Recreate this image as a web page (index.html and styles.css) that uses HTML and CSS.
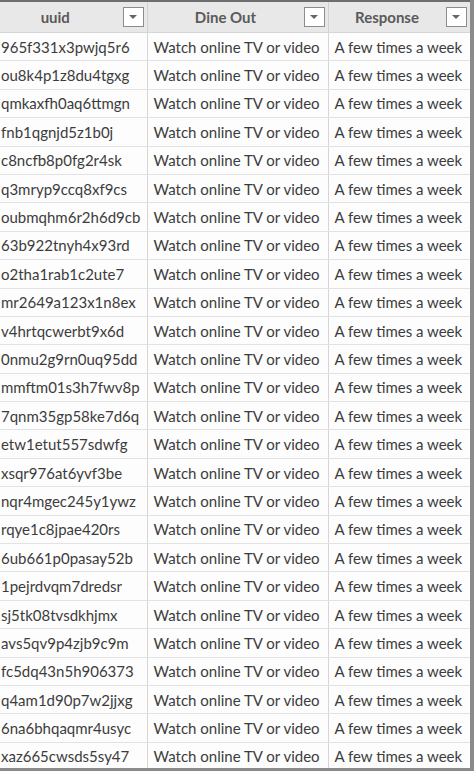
FILE: index.html
```html
<!DOCTYPE html>
<html>
<head>
<meta charset="utf-8">
<link rel="stylesheet" href="styles.css">
</head>
<body>
<div class="sheet">
  <table class="grid">
    <colgroup><col class="c1"><col class="c2"><col class="c3"></colgroup>
    <thead>
      <tr>
        <th class="h1"><div class="hcell"><span class="hlabel">uuid</span><span class="drop"></span></div></th>
        <th><div class="hcell"><span class="hlabel">Dine Out</span><span class="drop"></span></div></th>
        <th><div class="hcell"><span class="hlabel">Response</span><span class="drop"></span></div></th>
      </tr>
    </thead>
    <tbody>
      <tr><td class="id">965f331x3pwjq5r6</td><td>Watch online TV or video</td><td>A few times a week</td></tr>
      <tr><td class="id">ou8k4p1z8du4tgxg</td><td>Watch online TV or video</td><td>A few times a week</td></tr>
      <tr><td class="id">qmkaxfh0aq6ttmgn</td><td>Watch online TV or video</td><td>A few times a week</td></tr>
      <tr><td class="id">fnb1qgnjd5z1b0j</td><td>Watch online TV or video</td><td>A few times a week</td></tr>
      <tr><td class="id">c8ncfb8p0fg2r4sk</td><td>Watch online TV or video</td><td>A few times a week</td></tr>
      <tr><td class="id">q3mryp9ccq8xf9cs</td><td>Watch online TV or video</td><td>A few times a week</td></tr>
      <tr><td class="id">oubmqhm6r2h6d9cb</td><td>Watch online TV or video</td><td>A few times a week</td></tr>
      <tr><td class="id">63b922tnyh4x93rd</td><td>Watch online TV or video</td><td>A few times a week</td></tr>
      <tr><td class="id">o2tha1rab1c2ute7</td><td>Watch online TV or video</td><td>A few times a week</td></tr>
      <tr><td class="id">mr2649a123x1n8ex</td><td>Watch online TV or video</td><td>A few times a week</td></tr>
      <tr><td class="id">v4hrtqcwerbt9x6d</td><td>Watch online TV or video</td><td>A few times a week</td></tr>
      <tr><td class="id">0nmu2g9rn0uq95dd</td><td>Watch online TV or video</td><td>A few times a week</td></tr>
      <tr><td class="id">mmftm01s3h7fwv8p</td><td>Watch online TV or video</td><td>A few times a week</td></tr>
      <tr><td class="id">7qnm35gp58ke7d6q</td><td>Watch online TV or video</td><td>A few times a week</td></tr>
      <tr><td class="id">etw1etut557sdwfg</td><td>Watch online TV or video</td><td>A few times a week</td></tr>
      <tr><td class="id">xsqr976at6yvf3be</td><td>Watch online TV or video</td><td>A few times a week</td></tr>
      <tr><td class="id">nqr4mgec245y1ywz</td><td>Watch online TV or video</td><td>A few times a week</td></tr>
      <tr><td class="id">rqye1c8jpae420rs</td><td>Watch online TV or video</td><td>A few times a week</td></tr>
      <tr><td class="id">6ub661p0pasay52b</td><td>Watch online TV or video</td><td>A few times a week</td></tr>
      <tr><td class="id">1pejrdvqm7dredsr</td><td>Watch online TV or video</td><td>A few times a week</td></tr>
      <tr><td class="id">sj5tk08tvsdkhjmx</td><td>Watch online TV or video</td><td>A few times a week</td></tr>
      <tr><td class="id">avs5qv9p4zjb9c9m</td><td>Watch online TV or video</td><td>A few times a week</td></tr>
      <tr><td class="id">fc5dq43n5h906373</td><td>Watch online TV or video</td><td>A few times a week</td></tr>
      <tr><td class="id">q4am1d90p7w2jjxg</td><td>Watch online TV or video</td><td>A few times a week</td></tr>
      <tr><td class="id">6na6bhqaqmr4usyc</td><td>Watch online TV or video</td><td>A few times a week</td></tr>
      <tr><td class="id">xaz665cwsds5sy47</td><td>Watch online TV or video</td><td>A few times a week</td></tr>
    </tbody>
  </table>
</div>
</body>
</html>
```
FILE: styles.css
```css
html, body {
  margin: 0;
  padding: 0;
  background: #8a8a8a;
}
.sheet {
  width: 470px;
  height: 768px;
  overflow: hidden;
  background: #ffffff;
  border-top: 2px solid #6e6e6e;
  box-sizing: border-box;
}
.grid {
  border-collapse: collapse;
  table-layout: fixed;
  width: 470px;
  font-family: Lato, "Noto Sans", sans-serif;
  font-size: 15px;
  color: #3c3c3c;
}
.c1 { width: 147px; }
.c2 { width: 181px; }
.c3 { width: 142px; }
th {
  height: 30px;
  padding: 0;
  background: #e8e8e8;
  border-right: 1px solid #d2d2d2;
  border-bottom: 1px solid #d6d6d6;
  font-weight: 700;
  color: #5a5a5a;
}
.hcell {
  display: flex;
  align-items: center;
  height: 30px;
  padding-right: 3px;
}
.hlabel {
  flex: 1;
  text-align: center;
}
.h1 .hlabel {
  padding-right: 12px;
}
.drop {
  width: 19px;
  height: 18px;
  border: 1px solid #8c8c8c;
  background: #ffffff;
  display: flex;
  align-items: center;
  justify-content: center;
}
.drop::after {
  content: "";
  border-left: 4px solid transparent;
  border-right: 4px solid transparent;
  border-top: 4px solid #666666;
}
td {
  height: 28.4px;
  padding: 0 0 0 6px;
  border-right: 1px solid #d6d6d6;
  border-bottom: 1px solid #e2e2e2;
  white-space: nowrap;
  overflow: hidden;
  box-sizing: border-box;
  background: #fdfdfd;
}
td.id {
  padding-left: 1px;
}
```
